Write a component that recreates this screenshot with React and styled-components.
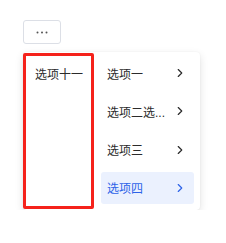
import React from "react";
import styled, { createGlobalStyle } from "styled-components";

const GlobalStyle = createGlobalStyle`
    body {
        margin: 0;
        background: #fff;
        font-family: "Liberation Sans", "Noto Sans CJK SC", sans-serif;
    }
`;

const Page = styled.div`
    padding: 20px 0 0 23px;
`;

const Trigger = styled.button`
    display: flex;
    align-items: center;
    justify-content: center;
    box-sizing: border-box;
    width: 38px;
    height: 24px;
    padding: 0;
    border: 1px solid #dcdfe6;
    border-radius: 3px;
    background: #fff;
    color: #555;
`;

const Menu = styled.div`
    display: flex;
    box-sizing: border-box;
    width: 177px;
    margin-top: 8px;
    padding: 1px 0;
    border-radius: 4px;
    background: #fff;
    box-shadow: 0 3px 8px rgba(0, 0, 0, 0.12), 0 0 2px rgba(0, 0, 0, 0.06);
`;

const LeftColumn = styled.div`
    box-sizing: border-box;
    width: 71px;
    padding: 1px 3px;
    border: 3px solid #f5221b;
    border-radius: 2px;
`;

const RightColumn = styled.ul`
    flex: 1;
    display: flex;
    flex-direction: column;
    gap: 6.3px;
    margin: 0;
    padding: 4px 6px 5px 7px;
    list-style: none;
`;

const Item = styled.li`
    display: flex;
    align-items: center;
    justify-content: space-between;
    height: 32px;
    padding: 0 7px 0 6px;
    border-radius: 3px;
    font-size: 12px;
    color: ${(p) => (p.$active ? "#2d63e8" : "#2b2b2b")};
    background: ${(p) => (p.$active ? "#ebf1fe" : "transparent")};
`;

const Label = styled.span`
    white-space: nowrap;
`;

function Chevron() {
    return (
        <svg width="14" height="14" viewBox="0 0 24 24" fill="none" stroke="currentColor" strokeWidth="2" strokeLinecap="round" strokeLinejoin="round">
            <path d="M9 6l6 6-6 6" />
        </svg>
    );
}

function Dots() {
    return (
        <svg width="12" height="3" viewBox="0 0 12 3" fill="currentColor">
            <circle cx="1.5" cy="1.5" r="1" />
            <circle cx="6" cy="1.5" r="1" />
            <circle cx="10.5" cy="1.5" r="1" />
        </svg>
    );
}

const options = [
    { label: "选项一" },
    { label: "选项二选..." },
    { label: "选项三" },
    { label: "选项四", active: true }
];

export default function App() {
    return (
        <Page>
            <GlobalStyle />
            <Trigger type="button">
                <Dots />
            </Trigger>
            <Menu>
                <LeftColumn>
                    <Item>
                        <Label>选项十一</Label>
                    </Item>
                </LeftColumn>
                <RightColumn>
                    {options.map((o) => (
                        <Item key={o.label} $active={o.active}>
                            <Label>{o.label}</Label>
                            <Chevron />
                        </Item>
                    ))}
                </RightColumn>
            </Menu>
        </Page>
    );
}
